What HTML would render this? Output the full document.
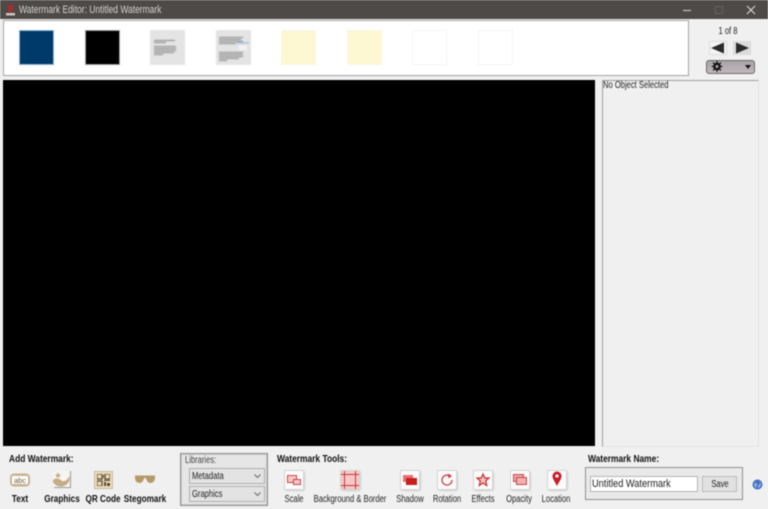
<!DOCTYPE html>
<html>
<head>
<meta charset="utf-8">
<style>
html,body{margin:0;padding:0;width:768px;height:509px;overflow:hidden;background:#f0f0f0;font-family:"Liberation Sans",sans-serif;}
#w{position:absolute;left:0;top:0;width:768px;height:509px;overflow:hidden;filter:blur(.4px);}
.a{position:absolute;}
.t{position:absolute;font-size:10px;color:#222;white-space:nowrap;line-height:11px;transform:scaleX(.76);transform-origin:0 50%;}
.c{transform:translateX(-50%) scaleX(.76);transform-origin:50% 50%;}
.b{font-weight:bold;color:#111;transform:scaleX(.84);transform-origin:0 50%;}
.b.c{transform:translateX(-50%) scaleX(.82);transform-origin:50% 50%;}
.th{position:absolute;top:30px;width:35px;height:35px;box-sizing:border-box;}
.tx{filter:blur(.5px);}
.ln{position:absolute;left:4px;height:1px;background:#444;opacity:.6;}
.ic{position:absolute;width:18px;height:18px;top:471px;background:#fbfbfb;box-shadow:0 0 0 1px #d5d5d5,1px 1px 2px #999;}
.ic svg,.g svg{display:block;}
.sel{position:absolute;left:189px;width:74px;height:14px;background:#e3e3e3;border:1px solid #adadad;}
.sel svg{position:absolute;right:3px;top:5px;}
</style>
</head>
<body>
<div id="w">
<div class="a" style="left:0;top:0;width:768px;height:19px;background:#4d4a47;"></div>
<svg class="a" style="left:5px;top:4px" width="11" height="12" viewBox="0 0 11 12"><circle cx="5.500" cy="3.500" r="2.800" fill="#b3292b"/><rect x="4" y="5" width="3" height="4" fill="#b3292b"/><rect x="1" y="9" width="9" height="2.500" fill="#c9c5c5"/></svg>
<div class="t" style="left:19px;top:4px;font-size:11px;color:#d5d3d1;line-height:12px;transform:scaleX(.77);">Watermark Editor: Untitled Watermark</div>
<div class="a" style="left:683px;top:10px;width:8px;height:1px;background:#d8d8d8;"></div>
<div class="a" style="left:715px;top:6px;width:6px;height:6px;border:1px solid #666;"></div>
<svg class="a" style="left:746px;top:5px" width="10" height="10" viewBox="0 0 10 10"><path d="M1 1L9 9M9 1L1 9" stroke="#e0e0e0" stroke-width="1"/></svg>

<div class="a" style="left:3px;top:20px;width:684px;height:54px;background:#fff;border:1px solid #a5a5a5;"></div>
<div class="th" style="left:19px;background:#003a6b;border:1px solid #8fb4d0;"></div>
<div class="th" style="left:85px;background:#000;border:1px solid #999;"></div>
<div class="th tx" style="left:150px;background:#e4e4e4;">
<div class="ln" style="top:10px;width:21px"></div><div class="ln" style="top:12px;width:12px"></div><div class="ln" style="top:16px;width:22px"></div><div class="ln" style="top:18px;width:22px"></div><div class="ln" style="top:20px;width:22px"></div><div class="ln" style="top:22px;width:20px"></div><div class="ln" style="top:24px;width:9px"></div></div>
<div class="th tx" style="left:216px;background:#e4e4e4;">
<div class="ln" style="top:7px;width:24px;left:3px"></div><div class="ln" style="top:9px;width:22px;left:3px"></div><div class="ln" style="top:11px;width:24px;left:3px"></div><div class="ln" style="top:13px;width:17px;left:3px"></div><div class="a" style="left:21px;top:12px;width:12px;height:2px;background:#b4c8e4"></div><div class="a" style="left:23px;top:15px;width:8px;height:5px;background:#f2f2f2"></div><div class="ln" style="top:22px;width:24px;left:3px"></div><div class="ln" style="top:24px;width:24px;left:3px"></div><div class="ln" style="top:26px;width:24px;left:3px"></div><div class="ln" style="top:28px;width:20px;left:3px"></div><div class="ln" style="top:30px;width:8px;left:3px"></div></div>
<div class="th" style="left:281px;background:#fdf7d2;border:1px solid #f8f6e8;"></div>
<div class="th" style="left:347px;background:#fdf7d2;border:1px solid #f8f6e8;"></div>
<div class="th" style="left:412px;background:#fff;border:1px solid #f5f5f5;"></div>
<div class="th" style="left:478px;background:#fff;border:1px solid #f5f5f5;"></div>

<div class="t c" style="left:728px;top:26px;">1 of 8</div>
<div class="a" style="left:709px;top:41px;width:16px;height:12px;background:#f4f4f4;border:1px solid #ddd;"></div>
<svg class="a" style="left:711px;top:42px" width="14" height="12" viewBox="0 0 14 12"><path d="M0 6L13 .5V11.500Z" fill="#2a2a2a"/></svg>
<div class="a" style="left:733px;top:41px;width:16px;height:12px;background:#dcdcdc;border:1px solid #ddd;"></div>
<svg class="a" style="left:735px;top:42px" width="14" height="12" viewBox="0 0 14 12"><path d="M14 6L1 .5V11.500Z" fill="#2a2a2a"/></svg>
<div class="a" style="left:706px;top:60px;width:47px;height:12px;background:linear-gradient(#a8a4a6,#c2b6bd);border:1px solid #6a6a6a;border-radius:3px;"></div>
<svg class="a" style="left:711px;top:60px" width="12" height="13" viewBox="0 0 12 13"><circle cx="6" cy="6.500" r="3" fill="none" stroke="#111" stroke-width="1.800"/><path d="M6 1V12M.5 6.500H11.500M2 2.500L10 10.500M10 2.500L2 10.500" stroke="#111" stroke-width="1.100"/><circle cx="6" cy="6.500" r="1.400" fill="#aaa"/></svg>
<svg class="a" style="left:745px;top:65px" width="6" height="4" viewBox="0 0 6 4"><path d="M0 0H6L3 4Z" fill="#111"/></svg>

<div class="a" style="left:3px;top:80px;width:592px;height:366px;background:#000;"></div>
<div class="a" style="left:602px;top:80px;width:155px;height:365px;background:#f0f0f0;border:1px solid #a0a0a0;border-right-color:#e3e3e3;border-bottom-color:#e3e3e3;"></div>
<div class="t" style="left:603px;top:80px;">No Object Selected</div>

<div class="t b" style="left:9px;top:454px;">Add Watermark:</div>
<div class="g a" style="left:9px;top:471px"><svg width="22" height="18" viewBox="0 0 22 18"><rect x="1" y="2.500" width="20" height="13" rx="4" fill="#c8b28e"/><rect x="3" y="5" width="16" height="8" fill="#fff"/><text x="11" y="12" font-size="7.500" font-family="Liberation Sans" fill="#6a5a40" text-anchor="middle">abc</text></svg></div>
<div class="t b c" style="left:20px;top:494px;">Text</div>
<div class="g a" style="left:53px;top:471px"><svg width="18" height="18" viewBox="0 0 18 18"><rect width="18" height="16" fill="#f8f6f2"/><path d="M0 9C3 6 7 8 9 10C11 11 15 9 16 5C17.500 9 16 13 11 15C7 16.500 2 15 0 11Z" fill="#c4ad85"/><path d="M5 1L6 3.500H8L6.500 5L7 7L5 6L3 7L3.500 5L2 3.500H4Z" fill="#c4ad85"/><path d="M17.500 0V16.500H1" fill="none" stroke="#999" stroke-width="1"/></svg></div>
<div class="t b c" style="left:61.500px;top:494px;">Graphics</div>
<div class="a" style="left:94px;top:471px;width:19px;height:18px;background:#eadcc0;border:1px solid #cbb89a;box-sizing:border-box;"></div>
<svg class="a" style="left:97px;top:474px" width="13" height="12" viewBox="0 0 13 12"><path d="M0 0H5V5H0ZM8 0H13V5H8ZM0 7H5V12H0Z" fill="none" stroke="#5c4a2a" stroke-width="1.200"/><path d="M6 1H7V4H6ZM7 6H13V7H7ZM7 8H9V12H7ZM10 9H13V12H10Z" fill="#5c4a2a"/></svg>
<div class="t b c" style="left:103px;top:494px;">QR Code</div>
<svg class="a" style="left:135px;top:474px" width="20" height="10" viewBox="0 0 20 10"><path d="M0 1.500H20V3.500C20 7 18 9 15.500 9C13 9 11.500 7 11 4H9C8.500 7 7 9 4.500 9C2 9 0 7 0 3.500Z" fill="#b59a68"/></svg>
<div class="t b c" style="left:145px;top:494px;">Stegomark</div>

<div class="a" style="left:180px;top:453px;width:86px;height:51px;background:#e6e6e6;border:1px solid #8f8f8f;box-shadow:inset 0 0 0 1px #c9c9c9;"></div>
<div class="t" style="left:185px;top:455px;color:#444;">Libraries:</div>
<div class="sel" style="top:468px;"><div class="t" style="left:2px;top:2px;">Metadata</div><svg width="7" height="4" viewBox="0 0 7 4"><path d="M.5 .5L3.500 3.500L6.500 .5" fill="none" stroke="#666"/></svg></div>
<div class="sel" style="top:486px;"><div class="t" style="left:2px;top:2px;">Graphics</div><svg width="7" height="4" viewBox="0 0 7 4"><path d="M.5 .5L3.500 3.500L6.500 .5" fill="none" stroke="#666"/></svg></div>

<div class="t b" style="left:277px;top:454px;">Watermark Tools:</div>
<div class="ic" style="left:285px;"><svg width="18" height="18" viewBox="0 0 18 18"><rect x="2.500" y="4.500" width="9" height="7" fill="#f6c8c8" stroke="#c84848"/><rect x="8.500" y="8.500" width="7" height="5" fill="#f6c8c8" stroke="#c84848"/></svg></div>
<div class="t c" style="left:294px;top:494px;">Scale</div>
<div class="ic" style="left:341px;"><svg width="18" height="18" viewBox="0 0 18 18"><rect width="18" height="18" fill="#f6c8c8"/><path d="M3.500 0V18M14.500 0V18M0 3.500H18M0 14.500H18" stroke="#c83838"/></svg></div>
<div class="t c" style="left:350px;top:494px;">Background &amp; Border</div>
<div class="ic" style="left:401px;"><svg width="18" height="18" viewBox="0 0 18 18"><rect x="2" y="4" width="10" height="7" fill="#e87070"/><rect x="5" y="7" width="11" height="7" fill="#c81e1e"/></svg></div>
<div class="t c" style="left:410px;top:494px;">Shadow</div>
<div class="ic" style="left:438px;"><svg width="18" height="18" viewBox="0 0 18 18"><path d="M12.500 5.500A5 5 0 1 0 14 9" fill="none" stroke="#d03c3c" stroke-width="1.300"/><path d="M10 2.500L14 5L10.500 7.500Z" fill="#d03c3c"/></svg></div>
<div class="t c" style="left:446.500px;top:494px;">Rotation</div>
<div class="ic" style="left:474px;"><svg width="18" height="18" viewBox="0 0 18 18"><path d="M9 3L10.800 7H15L11.700 10L12.800 14.500L9 12L5.200 14.500L6.300 10L3 7H7.200Z" fill="#f6c0c0" stroke="#c83030" stroke-width="1.200"/></svg></div>
<div class="t c" style="left:483px;top:494px;">Effects</div>
<div class="ic" style="left:511px;"><svg width="18" height="18" viewBox="0 0 18 18"><rect x="2.500" y="3.500" width="10" height="7" fill="#f0a8a8" stroke="#c84848"/><rect x="5.500" y="6.500" width="10" height="7" fill="#eeb0b0" stroke="#c84848"/></svg></div>
<div class="t c" style="left:519px;top:494px;">Opacity</div>
<div class="ic" style="left:548px;"><svg width="18" height="18" viewBox="0 0 18 18"><path d="M9 15C6.500 10 4.500 8 4.500 5A4.500 4.500 0 0 1 13.500 5C13.500 8 11.500 10 9 15Z" fill="#c81e28"/><circle cx="9" cy="5" r="1.600" fill="#fff"/></svg></div>
<div class="t c" style="left:556px;top:494px;">Location</div>

<div class="t b" style="left:588px;top:454px;">Watermark Name:</div>
<div class="a" style="left:585px;top:467px;width:156px;height:31px;background:#e9e9e9;border:1px solid #8f8f8f;"></div>
<div class="a" style="left:590px;top:476px;width:106px;height:14px;background:#fff;border:1px solid #b5b5b5;"><div class="t" style="left:1px;top:1px;font-size:11px;line-height:12px;transform:scaleX(.84);">Untitled Watermark</div></div>
<div class="a" style="left:702px;top:476px;width:33px;height:14px;background:#e1e1e1;border:1px solid #bdbdbd;"><div class="t c" style="left:50%;top:2px;">Save</div></div>
<svg class="a" style="left:752px;top:479px" width="11" height="11" viewBox="0 0 11 11"><circle cx="5.500" cy="5.500" r="5" fill="#3a6cc0"/><circle cx="5.500" cy="5.500" r="3.500" fill="#8fb0e4"/><text x="5.500" y="8.500" font-size="8" font-weight="bold" font-family="Liberation Sans" fill="#123a88" text-anchor="middle">?</text></svg>
</div>
</body>
</html>
